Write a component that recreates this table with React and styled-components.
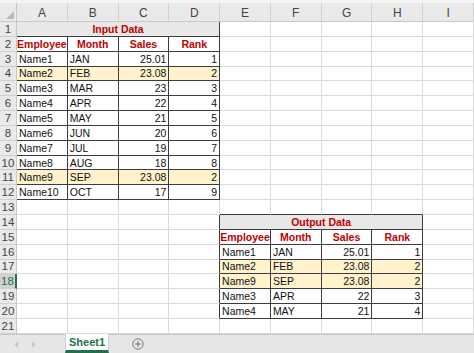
import React from 'react';
import styled, { createGlobalStyle } from 'styled-components';

const Global = createGlobalStyle`
  html, body { margin:0; padding:0; background:#fff; overflow:hidden; }
  body { font-family:"Liberation Sans", Arial, sans-serif; }
`;

const COLS = ['A', 'B', 'C', 'D', 'E', 'F', 'G', 'H', 'I'];
const ROWS = 21;
const SELECTED_ROW = 18;

const Frame = styled.div`
  width:474px;
  height:353px;
  display:flex;
  flex-direction:column;
  overflow:hidden;
`;
const TopStrip = styled.div`
  height:3px;
  background:#f4f4f4;
`;
const Sheet = styled.div`
  display:grid;
  grid-template-columns:17px repeat(9, 1fr);
  grid-template-rows:19px repeat(${ROWS}, 14.857px);
  flex:1;
`;
const Corner = styled.div`
  background:#e9e9e9;
  border-right:1px solid #c8c8c8;
  border-bottom:1px solid #c8c8c8;
  display:flex;
  align-items:flex-end;
  justify-content:flex-end;
  padding:0 2px 2px 0;
`;
const ColHead = styled.div`
  background:#e9e9e9;
  border-right:1px solid #d0d0d0;
  border-bottom:1px solid #c8c8c8;
  color:#444;
  font-size:12px;
  display:flex;
  align-items:center;
  justify-content:center;
  padding-top:1px;
`;
const RowHead = styled.div`
  background:${p => (p.$sel ? '#d2d2d2' : '#e9e9e9')};
  color:${p => (p.$sel ? '#217346' : '#444')};
  border-right:${p => (p.$sel ? '2px solid #217346' : '1px solid #c8c8c8')};
  border-bottom:1px solid #d0d0d0;
  font-size:11.5px;
  display:flex;
  align-items:center;
  justify-content:center;
`;
const Cell = styled.div`
  grid-column:${p => (p.$span ? `span ${p.$span}` : 'auto')};
  background:${p => p.$bg || '#fff'};
  border-right:1px solid ${p => p.$right};
  border-bottom:1px solid ${p => p.$bottom};
  color:${p => (p.$head ? '#c00000' : '#111')};
  font-weight:${p => (p.$head ? 700 : 400)};
  font-size:10.5px;
  display:flex;
  align-items:center;
  justify-content:${p => p.$align};
  padding:0 2px;
  white-space:nowrap;
  overflow:hidden;
`;
const TabBar = styled.div`
  height:19px;
  background:#e6e6e6;
  border-top:1px solid #c6c6c6;
  display:flex;
  align-items:stretch;
  box-sizing:border-box;
`;
const Nav = styled.div`
  width:65px;
  display:flex;
  align-items:center;
  justify-content:flex-start;
  gap:12px;
  padding-left:14px;
  box-sizing:border-box;
`;
const Tab = styled.div`
  width:44px;
  background:#fff;
  color:#217346;
  font-weight:700;
  font-size:11px;
  display:flex;
  align-items:center;
  justify-content:center;
  border-bottom:3px solid #217346;
  border-left:1px solid #cfcfcf;
  border-right:1px solid #cfcfcf;
  margin-top:-1px;
  box-sizing:border-box;
`;
const AddSheet = styled.div`
  width:58px;
  display:flex;
  align-items:center;
  justify-content:center;
`;

const inputRows = [
  ['Name1', 'JAN', '25.01', '1'],
  ['Name2', 'FEB', '23.08', '2', true],
  ['Name3', 'MAR', '23', '3'],
  ['Name4', 'APR', '22', '4'],
  ['Name5', 'MAY', '21', '5'],
  ['Name6', 'JUN', '20', '6'],
  ['Name7', 'JUL', '19', '7'],
  ['Name8', 'AUG', '18', '8'],
  ['Name9', 'SEP', '23.08', '2', true],
  ['Name10', 'OCT', '17', '9'],
];
const outputRows = [
  ['Name1', 'JAN', '25.01', '1'],
  ['Name2', 'FEB', '23.08', '2', true],
  ['Name9', 'SEP', '23.08', '2', true],
  ['Name3', 'APR', '22', '3'],
  ['Name4', 'MAY', '21', '4'],
];
const heads = ['Employee', 'Month', 'Sales', 'Rank'];

const tables = [
  { row: 1, col: 0, title: 'Input Data', data: inputRows },
  { row: 14, col: 4, title: 'Output Data', data: outputRows },
];

const findTable = (r, c) =>
  tables.find(t => r >= t.row && r < t.row + t.data.length + 2 && c >= t.col && c < t.col + 4);
const inTable = (r, c) => !!findTable(r, c);

const DARK = '#3c3c3c';
const GRID = '#dadada';

function buildCells() {
  const cells = [];
  for (let r = 1; r <= ROWS; r++) {
    cells.push(
      <RowHead key={`rh${r}`} $sel={r === SELECTED_ROW}>{r}</RowHead>
    );
    let c = 0;
    while (c < COLS.length) {
      const t = findTable(r, c);
      const bottom = inTable(r, c) || inTable(r + 1, c) ? DARK : GRID;
      if (t && r === t.row) {
        // merged title across the four columns
        cells.push(
          <Cell key={`${r}-${c}`} $span={4} $bg="#e9e8e8" $head $align="center" $right={DARK} $bottom={DARK}>
            {t.title}
          </Cell>
        );
        c += 4;
        continue;
      }
      const right = inTable(r, c) || inTable(r, c + 1) ? DARK : GRID;
      let text = '';
      let head = false;
      let bg;
      let align = 'flex-start';
      if (t) {
        const k = c - t.col;
        if (r === t.row + 1) {
          text = heads[k];
          head = true;
          align = 'center';
        } else {
          const d = t.data[r - t.row - 2];
          text = d[k];
          if (d[4]) bg = '#fff2cc';
          if (k >= 2) align = 'flex-end';
        }
      }
      cells.push(
        <Cell key={`${r}-${c}`} $bg={bg} $head={head} $align={align} $right={right} $bottom={bottom}>
          {text}
        </Cell>
      );
      c += 1;
    }
  }
  return cells;
}

export default function App() {
  return (
    <Frame>
      <Global />
      <TopStrip />
      <Sheet>
        <Corner>
          <svg width="8" height="8" viewBox="0 0 8 8">
            <polygon points="8,0 8,8 0,8" fill="#b9b9b9" />
          </svg>
        </Corner>
        {COLS.map(c => <ColHead key={c}>{c}</ColHead>)}
        {buildCells()}
      </Sheet>
      <TabBar>
        <Nav>
          <svg width="5" height="7" viewBox="0 0 5 7">
            <polygon points="4,0.5 4,6.5 0.5,3.5" fill="#c4c4c4" />
          </svg>
          <svg width="5" height="7" viewBox="0 0 5 7">
            <polygon points="1,0.5 1,6.5 4.5,3.5" fill="#c4c4c4" />
          </svg>
        </Nav>
        <Tab>Sheet1</Tab>
        <AddSheet>
          <svg width="12" height="12" viewBox="0 0 12 12">
            <circle cx="6" cy="6" r="5.2" fill="none" stroke="#7a7a7a" strokeWidth="1" />
            <path d="M6 3.2v5.6M3.2 6h5.6" stroke="#6a6a6a" strokeWidth="1.1" />
          </svg>
        </AddSheet>
      </TabBar>
    </Frame>
  );
}
